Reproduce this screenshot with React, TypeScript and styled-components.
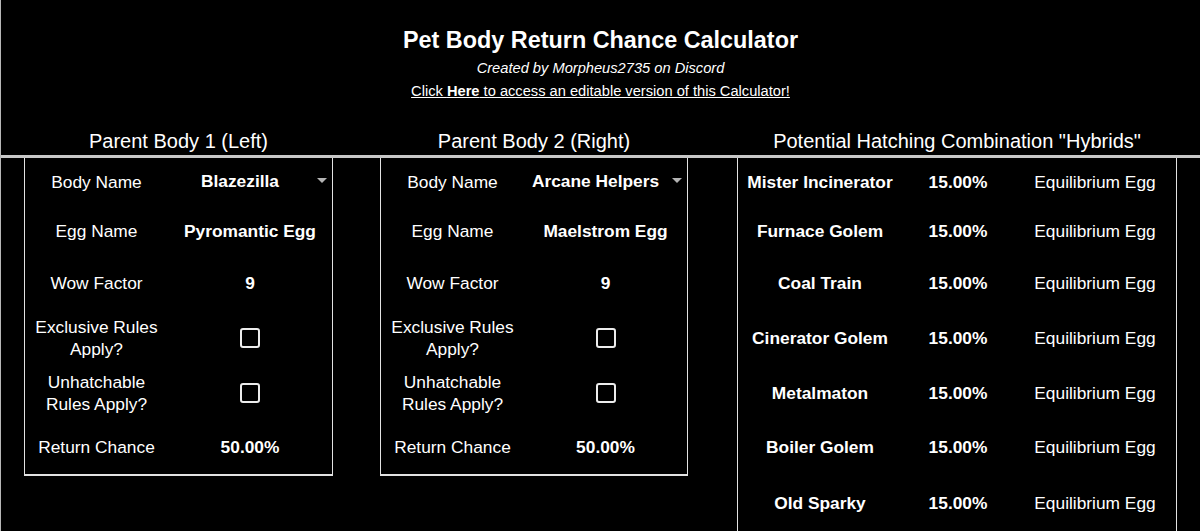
import React from "react";
import styled, { createGlobalStyle } from "styled-components";

const GlobalStyle = createGlobalStyle`
  html, body {
    margin: 0;
    padding: 0;
    background: #000;
    color: #fff;
    font-family: "Liberation Sans", Arial, sans-serif;
    overflow: hidden;
  }
`;

const Page = styled.div`
  height: 531px;
  border-left: 1px solid #b8b8b8;
  box-sizing: border-box;
  overflow: hidden;
`;

const Header = styled.header`
  padding-top: 26px;
  text-align: center;
`;

const Title = styled.h1`
  margin: 0;
  font-size: 23.4px;
  line-height: 28px;
  font-weight: bold;
`;

const Subtitle = styled.div`
  margin-top: 3px;
  font-size: 14.67px;
  line-height: 22px;
  font-style: italic;
`;

const EditLink = styled.a`
  display: inline-block;
  margin-top: 1px;
  font-size: 14.67px;
  line-height: 22px;
  color: #fff;
  text-decoration: underline;
  b { font-weight: bold; }
`;

/* panels and the spreadsheet gaps between them */
const ColumnsGrid = styled.div`
  display: grid;
  grid-template-columns: 309px 47px 308px 49px 440px;
  padding-left: 23px;
`;

const HeadingRow = styled(ColumnsGrid)`
  margin-top: 26px;
  margin-bottom: 1px;
`;

const Heading = styled.div<{ $col: number }>`
  grid-column: ${(p) => p.$col};
  text-align: center;
  font-size: 20px;
  line-height: 26px;
`;

const Board = styled(ColumnsGrid)`
  border-top: 3px solid #c8c8c8;
  align-items: start;
`;

const Panel = styled.div<{ $col: number; $open?: boolean }>`
  grid-column: ${(p) => p.$col};
  border-left: 1px solid #e2e2e2;
  border-right: 1px solid #e2e2e2;
  border-bottom: ${(p) => (p.$open ? "none" : "2px solid #e2e2e2")};
  font-size: 17.33px;
`;

const Row = styled.div<{ $h: number; $cols: string }>`
  display: grid;
  grid-template-columns: ${(p) => p.$cols};
  height: ${(p) => p.$h}px;
  align-items: center;
`;

const Cell = styled.div<{ $bold?: boolean }>`
  text-align: center;
  font-weight: ${(p) => (p.$bold ? "bold" : "normal")};
  line-height: 22px;
  white-space: nowrap;
`;

const DropCell = styled.div`
  display: flex;
  align-items: center;
  font-weight: bold;
`;

const DropText = styled.span`
  flex: 1;
  text-align: center;
  white-space: nowrap;
`;

const DropArrow = styled.span`
  width: 20px;
  display: flex;
  justify-content: center;
  margin-top: -2px;
  &::before {
    content: "";
    border-left: 5px solid transparent;
    border-right: 5px solid transparent;
    border-top: 5px solid #b4b4b4;
  }
`;

const CheckCell = styled.div`
  display: flex;
  justify-content: center;
`;

const CheckBox = styled.span`
  width: 20px;
  height: 20px;
  box-sizing: border-box;
  border: 2px solid #ececec;
  border-radius: 3px;
`;

const parentHeights = [47, 51, 54, 55, 55, 54];
const hybridHeights = [47, 51, 54, 55, 55, 54, 57];

type Parent = { title: string; body: string; egg: string; col: number };

const parents: Parent[] = [
  { title: "Parent Body 1 (Left)", body: "Blazezilla", egg: "Pyromantic Egg", col: 1 },
  { title: "Parent Body 2 (Right)", body: "Arcane Helpers", egg: "Maelstrom Egg", col: 3 },
];

const hybrids = [
  "Mister Incinerator",
  "Furnace Golem",
  "Coal Train",
  "Cinerator Golem",
  "Metalmaton",
  "Boiler Golem",
  "Old Sparky",
];

const PCOLS = "143px 1fr";
const HCOLS = "164px 112px 1fr";

const ParentPanel = ({ p }: { p: Parent }) => (
  <Panel $col={p.col}>
    <Row $h={parentHeights[0]} $cols={PCOLS}>
      <Cell>Body Name</Cell>
      <DropCell>
        <DropText>{p.body}</DropText>
        <DropArrow />
      </DropCell>
    </Row>
    <Row $h={parentHeights[1]} $cols={PCOLS}>
      <Cell>Egg Name</Cell>
      <Cell $bold>{p.egg}</Cell>
    </Row>
    <Row $h={parentHeights[2]} $cols={PCOLS}>
      <Cell>Wow Factor</Cell>
      <Cell $bold>9</Cell>
    </Row>
    <Row $h={parentHeights[3]} $cols={PCOLS}>
      <Cell>
        Exclusive Rules
        <br />
        Apply?
      </Cell>
      <CheckCell>
        <CheckBox />
      </CheckCell>
    </Row>
    <Row $h={parentHeights[4]} $cols={PCOLS}>
      <Cell>
        Unhatchable
        <br />
        Rules Apply?
      </Cell>
      <CheckCell>
        <CheckBox />
      </CheckCell>
    </Row>
    <Row $h={parentHeights[5]} $cols={PCOLS}>
      <Cell>Return Chance</Cell>
      <Cell $bold>50.00%</Cell>
    </Row>
  </Panel>
);

export default function App() {
  return (
    <Page>
      <GlobalStyle />
      <Header>
        <Title>Pet Body Return Chance Calculator</Title>
        <Subtitle>Created by Morpheus2735 on Discord</Subtitle>
        <EditLink href="#">
          Click <b>Here</b> to access an editable version of this Calculator!
        </EditLink>
      </Header>

      <HeadingRow>
        {parents.map((p) => (
          <Heading key={p.title} $col={p.col}>
            {p.title}
          </Heading>
        ))}
        <Heading $col={5}>Potential Hatching Combination "Hybrids"</Heading>
      </HeadingRow>

      <Board>
        {parents.map((p) => (
          <ParentPanel key={p.title} p={p} />
        ))}
        <Panel $col={5} $open>
          {hybrids.map((name, i) => (
            <Row key={name} $h={hybridHeights[i]} $cols={HCOLS}>
              <Cell $bold>{name}</Cell>
              <Cell $bold>15.00%</Cell>
              <Cell>Equilibrium Egg</Cell>
            </Row>
          ))}
        </Panel>
      </Board>
    </Page>
  );
}
